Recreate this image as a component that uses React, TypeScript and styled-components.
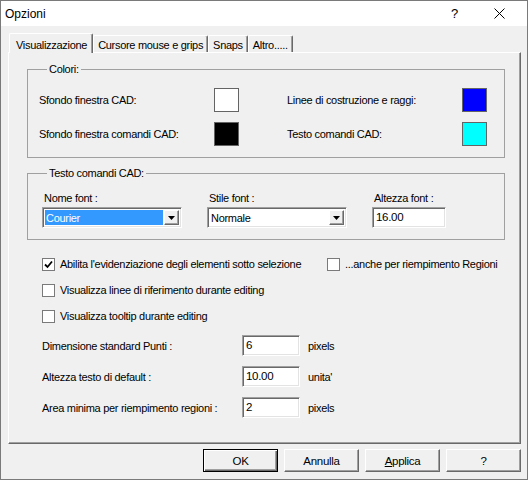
import React from "react";
import styled, { createGlobalStyle } from "styled-components";

const GlobalStyle = createGlobalStyle`
  html, body {
    margin: 0;
    padding: 0;
    background: #ffffff;
  }
  body {
    font-family: "Liberation Sans", Arial, sans-serif;
    font-size: 11px;
    letter-spacing: -0.3px;
    color: #000;
  }
  * {
    box-sizing: border-box;
  }
`;

const tabs = ["Visualizzazione", "Cursore mouse e grips", "Snaps", "Altro....."];

const colors = [
  { label: "Sfondo finestra CAD:", color: "#ffffff" },
  { label: "Linee di costruzione e raggi:", color: "#0000ff" },
  { label: "Sfondo finestra comandi CAD:", color: "#000000" },
  { label: "Testo comandi CAD:", color: "#00ffff" },
];

const fields = [
  { label: "Dimensione standard Punti :", value: "6", unit: "pixels" },
  { label: "Altezza testo di default :", value: "10.00", unit: "unita'" },
  { label: "Area minima per riempimento regioni :", value: "2", unit: "pixels" },
];

const CheckMark = () => (
  <svg width="9" height="9" viewBox="0 0 9 9">
    <path d="M1 4.5 L3.5 7 L8 1.5" fill="none" stroke="#000" strokeWidth="1.8" />
  </svg>
);

const Arrow = () => (
  <svg width="7" height="4" viewBox="0 0 7 4">
    <path d="M0 0 H7 L3.5 4 Z" fill="#000" />
  </svg>
);

const CloseIcon = () => (
  <svg width="11" height="11" viewBox="0 0 11 11">
    <path d="M0.5 0.5 L10.5 10.5 M10.5 0.5 L0.5 10.5" stroke="#000" strokeWidth="1" />
  </svg>
);

const Check: React.FC<{ checked?: boolean; label: string; width?: number }> = ({
  checked,
  label,
  width,
}) => (
  <CheckLabel style={width ? { width } : undefined}>
    <CheckBox>{checked ? <CheckMark /> : null}</CheckBox>
    <span>{label}</span>
  </CheckLabel>
);

const Combo: React.FC<{ value: string; selected?: boolean }> = ({ value, selected }) => (
  <ComboBox>
    <ComboValue selected={selected}>{value}</ComboValue>
    <DropButton>
      <Arrow />
    </DropButton>
  </ComboBox>
);

const App: React.FC = () => {
  return (
    <>
      <GlobalStyle />
      <Window>
        <TitleBar>
          <Title>Opzioni</Title>
          <Caption>
            <CaptionButton>?</CaptionButton>
            <CaptionButton>
              <CloseIcon />
            </CaptionButton>
          </Caption>
        </TitleBar>
        <Body>
          <TabStrip>
            {tabs.map((t, i) => (
              <Tab key={t} active={i === 0}>
                {t}
              </Tab>
            ))}
          </TabStrip>
          <Panel>
            <Group>
              <Legend>Colori:</Legend>
              <ColorGrid>
                {colors.map((c) => (
                  <ColorItem key={c.label}>
                    <span>{c.label}</span>
                    <Swatch color={c.color} />
                  </ColorItem>
                ))}
              </ColorGrid>
            </Group>
            <Group spaced>
              <Legend>Testo comandi CAD:</Legend>
              <FontRow>
                <FontCol>
                  <FontLabel>Nome font :</FontLabel>
                  <Combo value="Courier" selected />
                </FontCol>
                <FontCol>
                  <FontLabel>Stile font :</FontLabel>
                  <Combo value="Normale" />
                </FontCol>
                <FontCol small>
                  <FontLabel>Altezza font :</FontLabel>
                  <TextBox>16.00</TextBox>
                </FontCol>
              </FontRow>
            </Group>
            <Checks>
              <CheckRow>
                <Check checked width={285} label="Abilita l'evidenziazione degli elementi sotto selezione" />
                <Check label="...anche per riempimento Regioni" />
              </CheckRow>
              <CheckRow>
                <Check label="Visualizza linee di riferimento durante editing" />
              </CheckRow>
              <CheckRow>
                <Check label="Visualizza tooltip durante editing" />
              </CheckRow>
            </Checks>
            <Fields>
              {fields.map((f) => (
                <FieldRow key={f.label}>
                  <FieldLabel>{f.label}</FieldLabel>
                  <TextBox narrow>{f.value}</TextBox>
                  <Unit>{f.unit}</Unit>
                </FieldRow>
              ))}
            </Fields>
          </Panel>
          <ButtonRow>
            <Button isDefault>OK</Button>
            <Button>Annulla</Button>
            <Button>
              <u>A</u>pplica
            </Button>
            <Button>?</Button>
          </ButtonRow>
        </Body>
      </Window>
    </>
  );
};

const Window = styled.div`
  width: 528px;
  height: 480px;
  border: 1px solid #7a7a7a;
  display: flex;
  flex-direction: column;
  background: #f0f0f0;
`;
const TitleBar = styled.div`
  height: 25px;
  background: #fff;
  display: flex;
  align-items: center;
  justify-content: space-between;
  padding-left: 4px;
  padding-right: 5px;
`;
const Title = styled.div`
  font-size: 12px;
  letter-spacing: 0;
  padding-top: 1px;
`;
const Caption = styled.div`
  display: flex;
  height: 100%;
`;
const CaptionButton = styled.div`
  width: 45px;
  height: 100%;
  display: flex;
  align-items: center;
  justify-content: center;
  font-size: 13px;
  letter-spacing: 0;
`;
const Body = styled.div`
  flex: 1;
  display: flex;
  flex-direction: column;
  padding: 7px 6px 7px 7px;
`;
const TabStrip = styled.div`
  display: flex;
  align-items: flex-end;
  height: 19px;
  padding-left: 1px;
  position: relative;
  z-index: 1;
`;
const Tab = styled.div<{ active?: boolean }>`
  height: ${(p) => (p.active ? "20px" : "17px")};
  margin-bottom: ${(p) => (p.active ? "-1px" : "0")};
  padding: ${(p) => (p.active ? "2px 5px 0 6px" : "1px 4px 0 4px")};
  background: #f0f0f0;
  border-top: 1px solid #fff;
  border-left: 1px solid #fff;
  border-right: 1px solid #696969;
  box-shadow: inset -1px 0 0 #a0a0a0;
  border-radius: 2px 2px 0 0;
  display: flex;
  align-items: center;
  white-space: nowrap;
`;
const Panel = styled.div`
  flex: 1;
  display: flex;
  flex-direction: column;
  border-top: 1px solid #fff;
  border-left: 1px solid #fff;
  border-right: 1px solid #696969;
  border-bottom: 1px solid #696969;
  box-shadow: inset -1px -1px 0 #a0a0a0;
  padding: 10px 15px 0 18px;
`;
const Group = styled.fieldset<{ spaced?: boolean }>`
  margin: ${(p) => (p.spaced ? "9px" : "0")} 0 0 0;
  border: 1px solid #a0a0a0;
  padding: 12px 17px 11px 11px;
  min-width: 0;
`;
const Legend = styled.legend`
  margin-left: 8px;
  padding: 0 2px;
  line-height: 13px;
`;
const ColorGrid = styled.div`
  display: grid;
  grid-template-columns: 200px 200px;
  column-gap: 48px;
  row-gap: 10px;
`;
const ColorItem = styled.div`
  display: flex;
  align-items: center;
  justify-content: space-between;
`;
const Swatch = styled.div<{ color: string }>`
  width: 25px;
  height: 24px;
  background: ${(p) => p.color};
  border: 1px solid #646464;
`;
const FontRow = styled.div`
  display: flex;
  gap: 25px;
  padding-left: 3px;
`;
const FontCol = styled.div<{ small?: boolean }>`
  width: ${(p) => (p.small ? "74px" : "140px")};
  display: flex;
  flex-direction: column;
  gap: 2px;
`;
const FontLabel = styled.div`
  line-height: 13px;
  padding-left: 2px;
`;
const ComboBox = styled.div`
  height: 21px;
  display: flex;
  align-items: stretch;
  background: #fff;
  border: 1px solid;
  border-color: #a0a0a0 #fff #fff #a0a0a0;
  box-shadow: inset 1px 1px 0 #696969, inset -1px -1px 0 #e3e3e3;
  padding: 2px;
`;
const ComboValue = styled.div<{ selected?: boolean }>`
  flex: 1;
  display: flex;
  align-items: center;
  padding-left: 1px;
  margin-right: 1px;
  background: ${(p) => (p.selected ? "#3399ff" : "transparent")};
  color: ${(p) => (p.selected ? "#fff" : "#000")};
`;
const DropButton = styled.div`
  width: 15px;
  display: flex;
  align-items: center;
  justify-content: center;
  background: #f0f0f0;
  border: 1px solid;
  border-color: #fff #696969 #696969 #fff;
  box-shadow: inset -1px -1px 0 #a0a0a0;
`;
const TextBox = styled.div<{ narrow?: boolean }>`
  width: ${(p) => (p.narrow ? "58px" : "74px")};
  height: 21px;
  background: #fff;
  border: 1px solid;
  border-color: #a0a0a0 #fff #fff #a0a0a0;
  box-shadow: inset 1px 1px 0 #696969, inset -1px -1px 0 #e3e3e3;
  padding: 0 3px 1px;
  display: flex;
  align-items: center;
  font-size: 11.5px;
`;
const Checks = styled.div`
  display: flex;
  flex-direction: column;
  gap: 12px;
  margin-top: 17px;
  padding-left: 15px;
`;
const CheckRow = styled.div`
  display: flex;
  height: 14px;
  align-items: center;
`;
const CheckLabel = styled.label`
  display: flex;
  align-items: center;
  gap: 5px;
  white-space: nowrap;
`;
const CheckBox = styled.span`
  width: 13px;
  height: 13px;
  background: #fff;
  border: 1px solid #7a7a7a;
  display: flex;
  align-items: center;
  justify-content: center;
`;
const Fields = styled.div`
  display: flex;
  flex-direction: column;
  gap: 10px;
  margin-top: 12px;
  padding-left: 15px;
`;
const FieldRow = styled.div`
  display: flex;
  align-items: center;
`;
const FieldLabel = styled.div`
  width: 200px;
`;
const Unit = styled.div`
  margin-left: 8px;
`;
const ButtonRow = styled.div`
  display: flex;
  justify-content: flex-end;
  gap: 6px;
  margin-top: 5px;
`;
const Button = styled.div<{ isDefault?: boolean }>`
  width: 75px;
  height: 23px;
  display: flex;
  align-items: center;
  justify-content: center;
  background: #f0f0f0;
  border: 1px solid;
  border-color: ${(p) => (p.isDefault ? "#000" : "#fff #696969 #696969 #fff")};
  box-shadow: ${(p) =>
    p.isDefault
      ? "inset 1px 1px 0 #fff, inset -1px -1px 0 #696969, inset -2px -2px 0 #a0a0a0"
      : "inset -1px -1px 0 #a0a0a0"};
  font-size: 11.5px;
`;

export default App;
